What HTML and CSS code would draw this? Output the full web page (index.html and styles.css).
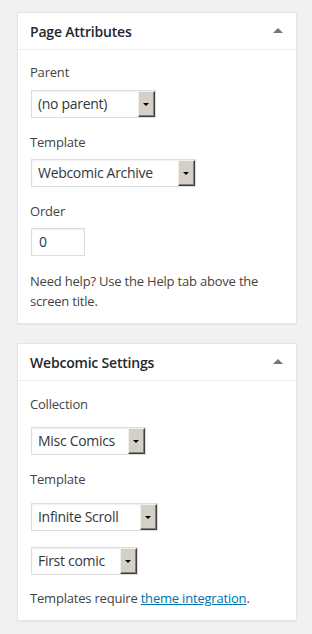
FILE: index.html
```html
<!DOCTYPE html>
<html lang="en">
<head>
    <meta charset="UTF-8">
    <meta name="viewport" content="width=device-width, initial-scale=1.0">
    <title>Page Attributes</title>
    <link rel="stylesheet" href="styles.css">
</head>
<body>
    <!-- Page Attributes box -->
    <div class="postbox">
        <div class="hndle">
            <h2>Page Attributes</h2>
            <span class="toggle"></span>
        </div>
        <div class="inside">
            <p class="label first">Parent</p>
            <div class="select w-parent"><span class="value">(no parent)</span><span class="btn"></span></div>
            <p class="label">Template</p>
            <div class="select w-template"><span class="value">Webcomic Archive</span><span class="btn"></span></div>
            <p class="label">Order</p>
            <div class="input">0</div>
            <p class="help">Need help? Use the Help tab above the screen title.</p>
        </div>
    </div>

    <!-- Webcomic Settings box -->
    <div class="postbox">
        <div class="hndle">
            <h2>Webcomic Settings</h2>
            <span class="toggle"></span>
        </div>
        <div class="inside">
            <p class="label label-wide first">Collection</p>
            <div class="select w-collection"><span class="value">Misc Comics</span><span class="btn"></span></div>
            <p class="label label-wide">Template</p>
            <div class="select w-scroll"><span class="value">Infinite Scroll</span><span class="btn"></span></div>
            <div class="select w-first"><span class="value">First comic</span><span class="btn"></span></div>
            <p class="help help-tight">Templates require <a href="#">theme integration</a>.</p>
        </div>
    </div>
</body>
</html>
```

FILE: styles.css
```css
body {
    font-family: 'Open Sans', 'Noto Sans', sans-serif;
    font-size: 13px;
    color: #444;
    background-color: #f1f1f1;
    margin: 0;
    padding: 12px 15px 0 17px;
}

.postbox {
    background: #fff;
    border: 1px solid #e5e5e5;
    box-shadow: 0 1px 1px rgba(0, 0, 0, 0.04);
    margin-bottom: 19px;
}

.hndle {
    display: flex;
    align-items: center;
    justify-content: space-between;
    height: 36px;
    padding: 0 13px 0 12px;
    border-bottom: 1px solid #eee;
}

.hndle h2 {
    margin: 0;
    font-size: 14px;
    font-weight: 600;
    color: #23282d;
    letter-spacing: -0.2px;
}

/* petit triangle gris */
.toggle {
    width: 0;
    height: 0;
    border-left: 5px solid transparent;
    border-right: 5px solid transparent;
    border-bottom: 5px solid #72777c;
    margin-top: -2px;
}

.inside {
    padding: 0 12px 12px 12px;
}

.label {
    margin: 14px 0 7px;
    line-height: 20px;
    letter-spacing: -0.2px;
}

.label.first {
    margin-top: 12px;
    margin-bottom: 8px;
}

.label-wide,
.label-wide.first {
    margin-top: 13px;
    margin-bottom: 13px;
}

.label-wide + .select + .label-wide {
    margin-top: 14px;
    margin-bottom: 14px;
}

.select {
    display: flex;
    align-items: stretch;
    height: 26px;
    margin-left: 1px;
    border: 1px solid #ddd;
    box-shadow: inset 0 1px 2px rgba(0, 0, 0, 0.07);
    color: #32373c;
    font-size: 14px;
    line-height: 26px;
}

.select .value {
    flex: 1;
    padding-left: 6px;
    white-space: nowrap;
    overflow: hidden;
    letter-spacing: -0.3px;
}

.select .btn {
    width: 15px;
    background: #d4d0c8;
    border-top: 1px solid #f0efea;
    border-left: 1px solid #f0efea;
    border-right: 1px solid #404040;
    border-bottom: 1px solid #404040;
    box-shadow: inset -1px -1px 0 #808080;
    position: relative;
}

.select .btn::after {
    content: "";
    position: absolute;
    left: 4px;
    top: 11px;
    border-left: 3px solid transparent;
    border-right: 3px solid transparent;
    border-top: 3px solid #000;
}

.w-parent { width: 123px; }
.w-template { width: 163px; }
.w-collection { width: 113px; }
.w-scroll { width: 125px; }
.w-first { width: 105px; margin-top: 16px; }

.input {
    width: 45px;
    height: 26px;
    margin-left: 1px;
    padding-left: 7px;
    border: 1px solid #ddd;
    box-shadow: inset 0 1px 2px rgba(0, 0, 0, 0.07);
    color: #32373c;
    font-size: 14px;
    line-height: 26px;
}

.help {
    margin: 15px 0 0;
    line-height: 20px;
    letter-spacing: -0.2px;
}

.help-tight {
    margin-top: 13px;
}

.help a {
    color: #0073aa;
}
```
